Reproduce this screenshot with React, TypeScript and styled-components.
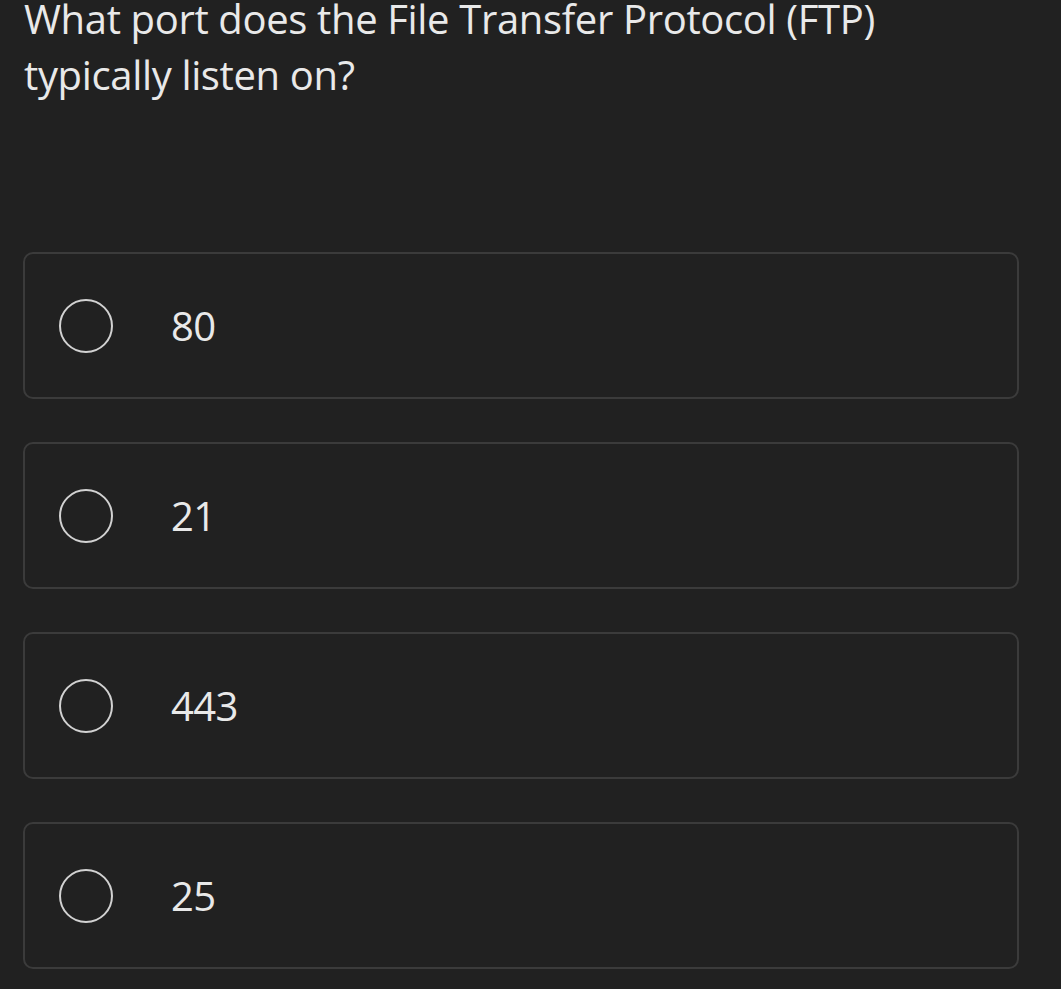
import React from "react";
import styled, { createGlobalStyle } from "styled-components";

const Global = createGlobalStyle`
  html, body { margin: 0; padding: 0; background: #212121; }
  body { font-family: "Open Sans", "Noto Sans", sans-serif; }
`;

const Page = styled.div`
  width: 1061px;
  height: 989px;
  overflow: hidden;
  box-sizing: border-box;
  padding: 0 42px 0 23px;
  background: #212121;
`;

const Question = styled.h1`
  margin: -9px 0 0 1px;
  font-size: 40px;
  font-weight: 400;
  line-height: 56px;
  color: #e9e9e9;
  letter-spacing: -0.35px;
`;

const Options = styled.div`
  display: flex;
  flex-direction: column;
  gap: 43px;
  margin-top: 149px;
`;

const Option = styled.label`
  display: flex;
  align-items: center;
  height: 147px;
  box-sizing: border-box;
  border: 2px solid #3b3b3b;
  border-radius: 10px;
  padding-left: 34px;
  cursor: pointer;
`;

const Radio = styled.span`
  width: 54px;
  height: 54px;
  box-sizing: border-box;
  border: 2px solid #d2d2d2;
  border-radius: 50%;
  flex: none;
`;

const OptionText = styled.span`
  margin-left: 58px;
  font-size: 40px;
  line-height: 1;
  color: #e9e9e9;
  letter-spacing: -0.6px;
`;

const answers = ["80", "21", "443", "25"];

export default function App() {
  return (
    <>
      <Global />
      <Page>
        <Question>
          What port does the File Transfer Protocol (FTP)
          <br />
          typically listen on?
        </Question>
        <Options>
          {answers.map((a) => (
            <Option key={a}>
              <Radio />
              <OptionText>{a}</OptionText>
            </Option>
          ))}
        </Options>
      </Page>
    </>
  );
}
